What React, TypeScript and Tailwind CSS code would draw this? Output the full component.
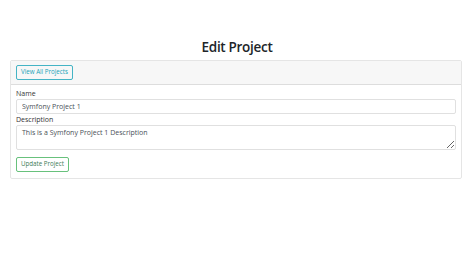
export default function App() {
  return (
    <div className="min-h-[267px] bg-white pt-[37px] text-[#212529]" style={{ fontFamily: '"Segoe UI", "Open Sans", sans-serif' }}>
      <h2 className="text-center text-[13.5px] font-semibold leading-[20px] tracking-[-0.3px] text-[#212529]">Edit Project</h2>

      <div className="mt-[3px] ml-[10px] mr-[12px] rounded-[2px] border border-black/[0.1]">
        <div className="flex h-[24px] items-center border-b border-black/[0.1] bg-[#f7f7f7] px-[5px]">
          <button className="h-[15px] rounded-[2px] border border-[#17a2b8]/80 px-[4px] text-[6.2px] leading-none text-[#17a2b8]">
            View All Projects
          </button>
        </div>

        <div className="flex flex-col px-[5px] pt-[3px] pb-[6px]">
          <label className="text-[7px] leading-[11px] text-[#333]">Name</label>
          <input
            className="h-[15px] w-full rounded-[2px] border border-black/[0.12] px-[5px] text-[7px] text-[#495057] outline-none"
            defaultValue="Symfony Project 1"
          />
          <label className="text-[7px] leading-[11px] text-[#333]">Description</label>
          <textarea
            className="block h-[25px] w-full rounded-[2px] border border-black/[0.12] px-[5px] py-[2px] text-[7px] leading-[10px] text-[#495057] outline-none"
            defaultValue="This is a Symfony Project 1 Description"
          />
          <div className="mt-[7px] flex">
            <button className="h-[15px] rounded-[2px] border border-[#28a745]/70 px-[4px] text-[6.2px] leading-none text-[#3d7a56]">
              Update Project
            </button>
          </div>
        </div>
      </div>
    </div>
  );
}
